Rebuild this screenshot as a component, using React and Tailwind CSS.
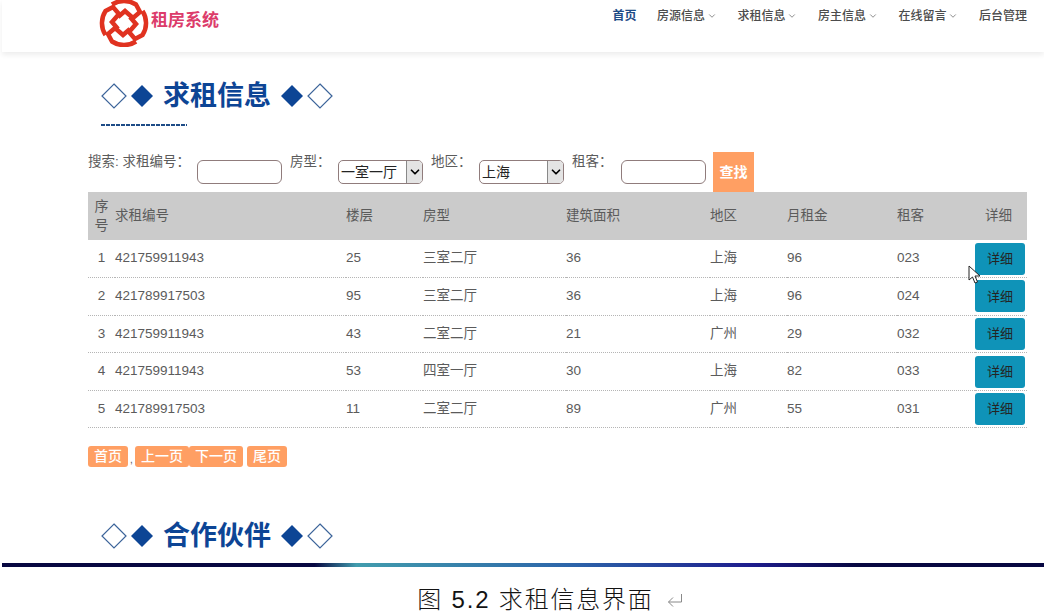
import React from "react";
import { ChevronDown } from "lucide-react";

const navItems = [
  { label: "首页", active: true },
  { label: "房源信息", caret: true },
  { label: "求租信息", caret: true },
  { label: "房主信息", caret: true },
  { label: "在线留言", caret: true },
  { label: "后台管理" },
];

const rows = [
  { id: 1, no: "421759911943", floor: "25", type: "三室二厅", area: "36", region: "上海", rent: "96", tenant: "023" },
  { id: 2, no: "421789917503", floor: "95", type: "三室二厅", area: "36", region: "上海", rent: "96", tenant: "024" },
  { id: 3, no: "421759911943", floor: "43", type: "二室二厅", area: "21", region: "广州", rent: "29", tenant: "032" },
  { id: 4, no: "421759911943", floor: "53", type: "四室一厅", area: "30", region: "上海", rent: "82", tenant: "033" },
  { id: 5, no: "421789917503", floor: "11", type: "二室二厅", area: "89", region: "广州", rent: "55", tenant: "031" },
];

function Logo() {
  return (
    <svg width="50" height="48" viewBox="-25 -24 50 48" fill="none" stroke="#e0301e" strokeWidth="4.5" strokeLinecap="butt" className="-mt-[1px] shrink-0">
      {[0, 90, 180, 270].map((deg) => (
        <path key={deg} transform={`rotate(${deg})`} d="M-12 -18.5 A22 22 0 0 1 12 -18.5 L16 -11 L9 -5 L1 -12 L-6 -6" />
      ))}
    </svg>
  );
}

function Diamond({ filled }) {
  return filled ? (
    <svg width="22" height="22" viewBox="0 0 22 22"><path d="M11 0 L22 11 L11 22 L0 11 Z" fill="#0b4394" /></svg>
  ) : (
    <svg width="26" height="26" viewBox="0 0 26 26" fill="none"><path d="M13 1 L25 13 L13 25 L1 13 Z" stroke="#3a6399" strokeWidth="1.2" /></svg>
  );
}

function SectionTitle({ children }) {
  return (
    <div className="flex items-center gap-[4px] text-[#0b4394]">
      <Diamond />
      <Diamond filled />
      <h2 className="mx-[6px] text-[27px] leading-[36px] font-bold">{children}</h2>
      <Diamond filled />
      <Diamond />
    </div>
  );
}

function Dropdown({ value, width }) {
  return (
    <div className={`relative mt-[8px] h-[24px] ${width}`}>
      <select defaultValue={value} className="h-full w-full appearance-none rounded-[5px] border border-[#8f7b7b] bg-white pl-[2px] text-[14px] text-[#222]">
        <option>{value}</option>
      </select>
      <span className="pointer-events-none absolute top-[1px] right-[1px] flex h-[22px] w-[16px] items-center justify-center rounded-r-[4px] border-l border-[#888] bg-[#e4e4e4]">
        <ChevronDown size={14} strokeWidth={3} className="text-black" />
      </span>
    </div>
  );
}

function TextBox({ width }) {
  return <input className={`mt-[8px] h-[24px] ${width} rounded-[6px] border border-[#8f7b7b] bg-white`} />;
}

export default function App() {
  return (
    <div className="h-[612px] w-[1044px] overflow-hidden bg-white pl-[2px] font-['Liberation_Sans','Noto_Sans_CJK_SC',sans-serif] text-[13.5px] text-[#5a5a5a] opacity-[.99]">
      <header className="flex h-[52px] items-start justify-between pr-[17px] pl-[97px] shadow-[0_3px_5px_rgba(0,0,0,0.07)]">
        <div className="flex items-start">
          <Logo />
          <span className="ml-[2px] text-[17px] leading-[42px] font-bold text-[#dc3a6a]">租房系统</span>
        </div>
        <nav className="flex gap-[20.5px] pt-[8px] text-[12px] leading-[16px] font-medium text-[#4a4a4a]">
          {navItems.map((item) => (
            <span key={item.label} className={`flex items-center gap-[2px] ${item.active ? "font-bold text-[#1c4a86]" : ""}`}>
              {item.label}
              {item.caret && <ChevronDown size={10} className="text-[#777]" />}
            </span>
          ))}
        </nav>
      </header>

      <main className="pr-[15px] pl-[86px]">
        <div className="pt-[26px] pl-[13px]">
          <SectionTitle>求租信息</SectionTitle>
          <div className="mt-[10px] h-[2px] w-[86px] bg-[repeating-linear-gradient(90deg,#1c4a86_0_3.5px,transparent_3.5px_5px)]" />
        </div>

        <div className="mt-[26px] flex h-[40px] items-start">
          <span className="leading-[20px]">搜索: 求租编号：</span>
          <TextBox width="ml-[7px] w-[85px]" />
          <span className="ml-[8px] w-[48px] leading-[20px]">房型：</span>
          <Dropdown value="一室一厅" width="w-[85px]" />
          <span className="ml-[8px] w-[48px] leading-[20px]">地区：</span>
          <Dropdown value="上海" width="w-[85px]" />
          <span className="ml-[8px] w-[49px] leading-[20px]">租客：</span>
          <TextBox width="w-[85px]" />
          <button className="ml-[7px] h-[40px] w-[41px] bg-[#ff9e62] text-[14px] font-bold text-white">查找</button>
        </div>

        <table className="w-[939px] table-fixed border-collapse">
          <colgroup>
            <col className="w-[27px]" />
            <col className="w-[231px]" />
            <col className="w-[77px]" />
            <col className="w-[143px]" />
            <col className="w-[144px]" />
            <col className="w-[77px]" />
            <col className="w-[110px]" />
            <col className="w-[78px]" />
            <col className="w-[52px]" />
          </colgroup>
          <thead>
            <tr className="h-[48px] bg-[#cbcbcb] text-left">
              <th className="text-center text-[14px] leading-[19px] font-normal">序<br />号</th>
              <th className="font-normal">求租编号</th>
              <th className="font-normal">楼层</th>
              <th className="font-normal">房型</th>
              <th className="font-normal">建筑面积</th>
              <th className="font-normal">地区</th>
              <th className="font-normal">月租金</th>
              <th className="font-normal">租客</th>
              <th className="pl-[10px] font-normal">详细</th>
            </tr>
          </thead>
          <tbody>
            {rows.map((r) => (
              <tr key={r.id} className="h-[37.6px] border-b border-dotted border-[#b5b5b5]">
                <td className="text-center">{r.id}</td>
                <td>{r.no}</td>
                <td>{r.floor}</td>
                <td>{r.type}</td>
                <td>{r.area}</td>
                <td>{r.region}</td>
                <td>{r.rent}</td>
                <td>{r.tenant}</td>
                <td className="py-0">
                  <button className="block h-[32px] w-[50px] rounded-[3px] bg-[#0d92b8] text-[13px] text-[#222]">详细</button>
                </td>
              </tr>
            ))}
          </tbody>
        </table>

        <div className="mt-[18px] flex items-end text-[14px] font-medium text-white">
          <span className="flex h-[21px] w-[40px] items-center justify-center rounded-[3px] bg-[#ff9e62]">首页</span>
          <span className="w-[7px] text-center text-[10px] font-normal text-[#555]">,</span>
          <span className="flex h-[21px] w-[54px] items-center justify-center rounded-[3px] bg-[#ff9e62]">上一页</span>
          <span className="flex h-[21px] w-[54px] items-center justify-center rounded-[3px] bg-[#ff9e62]">下一页</span>
          <span className="ml-[4px] flex h-[21px] w-[40px] items-center justify-center rounded-[3px] bg-[#ff9e62]">尾页</span>
        </div>

        <div className="mt-[51px] pl-[13px]">
          <SectionTitle>合作伙伴</SectionTitle>
        </div>
      </main>

      <div className="mt-[9px] h-[4px] bg-[linear-gradient(90deg,#05053f_0%,#05053f_30%,#3f9bad_34%,#2a62a8_55%,#1c1a8c_72%,#05053f_82%,#05053f_100%)]" />

      <div className="mt-[21px] flex items-center justify-center pl-[54px] text-[24px] leading-[24px] font-light text-[#111]">
        <span className="tracking-[1.8px]">图 5.2 求租信息界面</span>
        <svg width="16" height="13" viewBox="0 0 16 13" fill="none" stroke="#888" strokeWidth="1" className="ml-[13px]">
          <path d="M14.5 0 L14.5 8 L1.5 8 M6 3.5 L1.5 8 L6 12.5" />
        </svg>
      </div>

      <svg width="13" height="19" viewBox="0 0 13 19" className="absolute top-[265px] left-[968px]">
        <path d="M1 1 L1 15 L4.5 12 L7 18 L9.5 17 L7 11 L12 11 Z" fill="white" stroke="#222" strokeWidth="1" />
      </svg>
    </div>
  );
}
